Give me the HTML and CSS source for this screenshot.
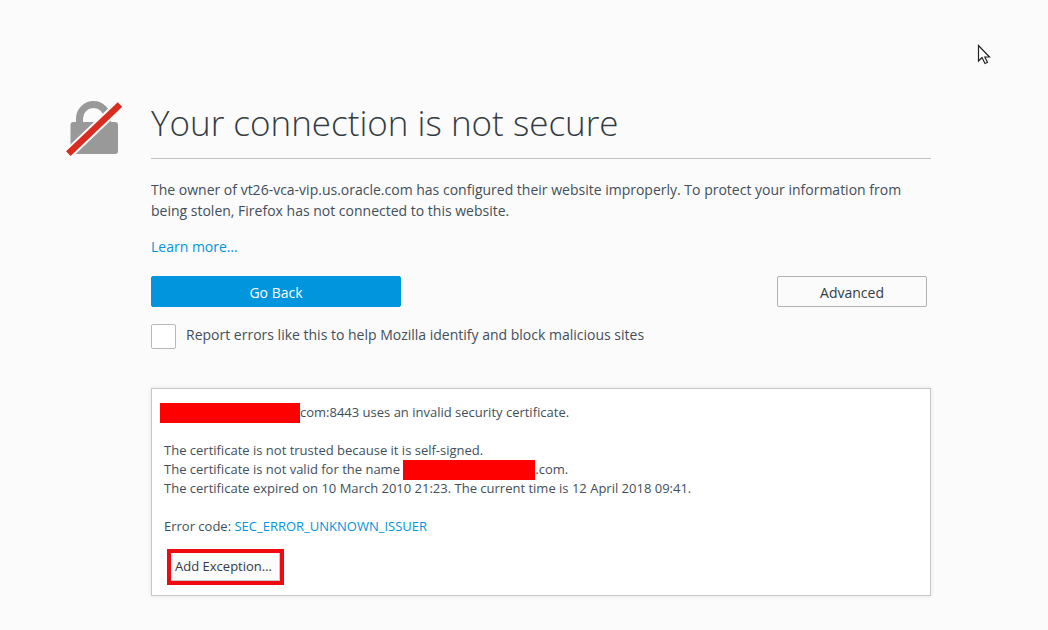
FILE: index.html
```html
<!DOCTYPE html>
<html lang="en">
<head>
    <meta charset="UTF-8">
    <meta name="viewport" content="width=device-width, initial-scale=1.0">
    <title>Insecure Connection</title>
    <link rel="stylesheet" href="styles.css">
</head>
<body>
    <main class="error-page">
        <svg class="lock-icon" viewBox="0 0 56 56" aria-hidden="true">
            <path d="M13.5 24v-5.500a14 14 0 0 1 28 0V24" fill="none" stroke="#999" stroke-width="7"/>
            <rect x="4.500" y="22" width="47.500" height="32" rx="3" fill="#999"/>
            <path d="M-2 57.800L58 0.700" stroke="#fbfbfb" stroke-width="10.500"/>
            <path d="M2.300 53.700L54 4.500" stroke="#d92d21" stroke-width="6.500"/>
        </svg>
        <div class="error-content">
            <h1>Your connection is not secure</h1>
            <p class="description">The owner of vt26-vca-vip.us.oracle.com has configured their website improperly. To protect your information from being stolen, Firefox has not connected to this website.</p>
            <a class="learn-more" href="#">Learn more…</a>
            <div class="button-row">
                <button type="button" class="btn btn-primary">Go Back</button>
                <button type="button" class="btn btn-advanced">Advanced</button>
            </div>
            <div class="report-row">
                <input type="checkbox" id="reportErrors">
                <label for="reportErrors">Report errors like this to help Mozilla identify and block malicious sites</label>
            </div>
            <section class="advanced-panel">
                <p><span class="redacted redacted-host"></span>com:8443 uses an invalid security certificate.</p>
                <p>
                    The certificate is not trusted because it is self-signed.<br>
                    The certificate is not valid for the name <span class="redacted redacted-name"></span>.com.<br>
                    The certificate expired on 10 March 2010 21:23. The current time is 12 April 2018 09:41.
                </p>
                <p>Error code: <a href="#">SEC_ERROR_UNKNOWN_ISSUER</a></p>
                <button type="button" class="btn-exception">Add Exception…</button>
            </section>
        </div>
    </main>
    <svg class="cursor" viewBox="0 0 14 21" aria-hidden="true">
        <path d="M1.500 1.500v15.500l3.500-3.500 3 6 2.500-1.200-2.700-5.300h4.700z" fill="#fff" stroke="#222" stroke-width="1.200"/>
    </svg>
</body>
</html>
```
FILE: styles.css
```css
* {
    margin: 0;
    padding: 0;
    box-sizing: border-box;
}

body {
    font-family: 'Segoe UI', 'Open Sans', sans-serif;
    font-size: 14px;
    line-height: 21px;
    background-color: #fbfbfb;
    color: #424f5a;
}

a {
    color: #0095dd;
    text-decoration: none;
}

a:hover {
    text-decoration: underline;
}

.error-page {
    display: grid;
    grid-template-columns: 56px 1fr;
    column-gap: 29px;
    padding: 100px 117px 34px 66px;
}

.lock-icon {
    width: 56px;
    height: 56px;
}

h1 {
    font-size: 35px;
    font-weight: 300;
    line-height: 46px;
    padding-bottom: 12px;
    border-bottom: 1px solid #c1c1c1;
    margin-bottom: 20px;
    color: #333b43;
}

.description {
    margin-bottom: 15px;
}

.learn-more {
    display: block;
    margin-bottom: 19px;
}

.button-row {
    display: flex;
    justify-content: space-between;
    padding-right: 4px;
    margin-bottom: 17px;
}

.btn {
    height: 31px;
    padding-top: 2px;
    font: inherit;
    border: 1px solid #b1b1b1;
    border-radius: 2px;
    cursor: pointer;
}

.btn-primary {
    width: 250px;
    background-color: #0095dd;
    border-color: #0095dd;
    color: #fff;
}

.btn-advanced {
    width: 150px;
    background-color: #fbfbfb;
    color: #333b43;
}

.report-row {
    display: flex;
    gap: 10px;
    margin-bottom: 39px;
}

.report-row input {
    appearance: none;
    width: 25px;
    height: 25px;
    background-color: #fff;
    border: 1px solid #b8b8b8;
    border-radius: 2px;
}

.report-row input:checked {
    background-color: #0095dd;
}

/* Certificate details */
.advanced-panel {
    padding: 14px 12px 10px;
    font-size: 13px;
    line-height: 19px;
    background-color: #fff;
    border: 1px solid #c8c8c8;
    box-shadow: 0 0 4px rgba(0, 0, 0, 0.1);
}

.advanced-panel p {
    margin-bottom: 19px;
}

.redacted {
    display: inline-block;
    height: 20px;
    margin-bottom: -1px;
    background-color: #f00;
    vertical-align: top;
}

.redacted-host {
    width: 140px;
    margin-left: -4px;
}

.redacted-name {
    width: 132px;
}

.btn-exception {
    display: block;
    width: 117px;
    height: 36px;
    margin: -6px 0 0 3px;
    padding: 0 4px 2px 0;
    font: inherit;
    background-color: #fbfbfb;
    border: 4px solid #ee0a0f;
    box-shadow: inset -1px -1px #c8c8c8;
    color: #333b43;
    cursor: pointer;
}

.cursor {
    position: absolute;
    top: 44px;
    left: 977px;
    width: 14px;
    height: 21px;
}
```
